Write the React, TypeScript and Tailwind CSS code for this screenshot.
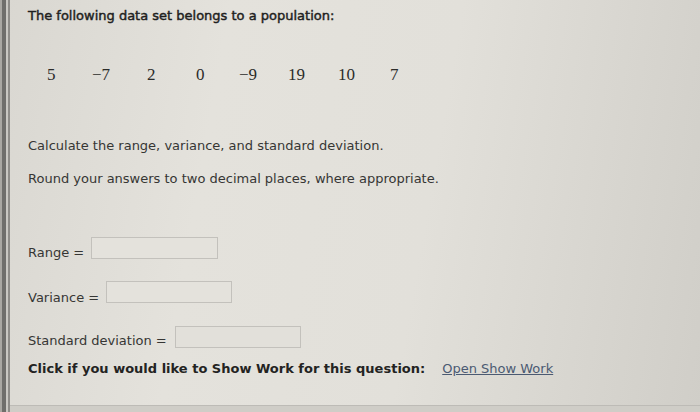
import React from "react";

const nums: { v: string; w: string }[] = [
  { v: "5", w: "w-[45px]" },
  { v: "\u22127", w: "w-[55px]" },
  { v: "2", w: "w-[49px]" },
  { v: "0", w: "w-[43px]" },
  { v: "\u22129", w: "w-[49px]" },
  { v: "19", w: "w-[50px]" },
  { v: "10", w: "w-[52px]" },
  { v: "7", w: "w-[20px]" },
];

export default function App() {
  return (
    <div className="w-[700px] h-[412px] overflow-hidden flex bg-[linear-gradient(100deg,#d9d7d1_0%,#e4e2dc_30%,#e2e0da_60%,#d0cec8_100%)] font-['DejaVu_Sans',Verdana,sans-serif] text-[#363634]">
      <div className="flex shrink-0">
        <div className="w-[2px] bg-[#a9a7a2]" />
        <div className="w-[4px] bg-[#6f6e6b]" />
        <div className="w-[2px] bg-[#c9c7c2]" />
        <div className="w-[2px] bg-[#8e8c88]" />
      </div>
      <div className="flex-1 flex flex-col">
        <div className="flex-1 flex flex-col pl-[18px] pt-[8px] text-[13px] leading-[16px]">
          <div className="text-[#1f1f1e] [-webkit-text-stroke:0.45px_#1f1f1e]">
            The following data set belongs to a population:
          </div>
          <div className="flex items-center mt-[41px] pl-[19px] font-['Liberation_Serif',serif] text-[17px] text-[#2c2c2a] leading-[20px]">
            {nums.map((n, i) => (
              <span key={i} className={n.w}>{n.v}</span>
            ))}
          </div>
          <div className="mt-[53px]">
            Calculate the range, variance, and standard deviation.
          </div>
          <div className="mt-[17px]">
            Round your answers to two decimal places, where appropriate.
          </div>
          <div className="mt-[50px] flex items-start gap-[7px]">
            <span className="mt-[8px]">Range =</span>
            <div className="w-[127px] h-[22px] border border-[#c3c1bc] bg-[#e4e2dc]" />
          </div>
          <div className="mt-[20px] flex items-start gap-[7px]">
            <span className="mt-[9px]">Variance =</span>
            <div className="w-[126px] h-[22px] border border-[#c3c1bc] bg-[#e4e2dc]" />
          </div>
          <div className="mt-[20px] flex items-start gap-[8px]">
            <span className="mt-[7px]">Standard deviation =</span>
            <div className="w-[126px] h-[22px] border border-[#c3c1bc] bg-[#e2e0da]" />
          </div>
          <div className="mt-[12px] flex items-center">
            <span className="font-bold text-[#232322]">Click if you would like to Show Work for this question:</span>
            <span className="ml-[17px] underline text-[#4b5a72]">Open Show Work</span>
          </div>
        </div>
        <div className="h-[7px] border-t border-[#bdbbb6] bg-[#cfcdc7]" />
      </div>
    </div>
  );
}
